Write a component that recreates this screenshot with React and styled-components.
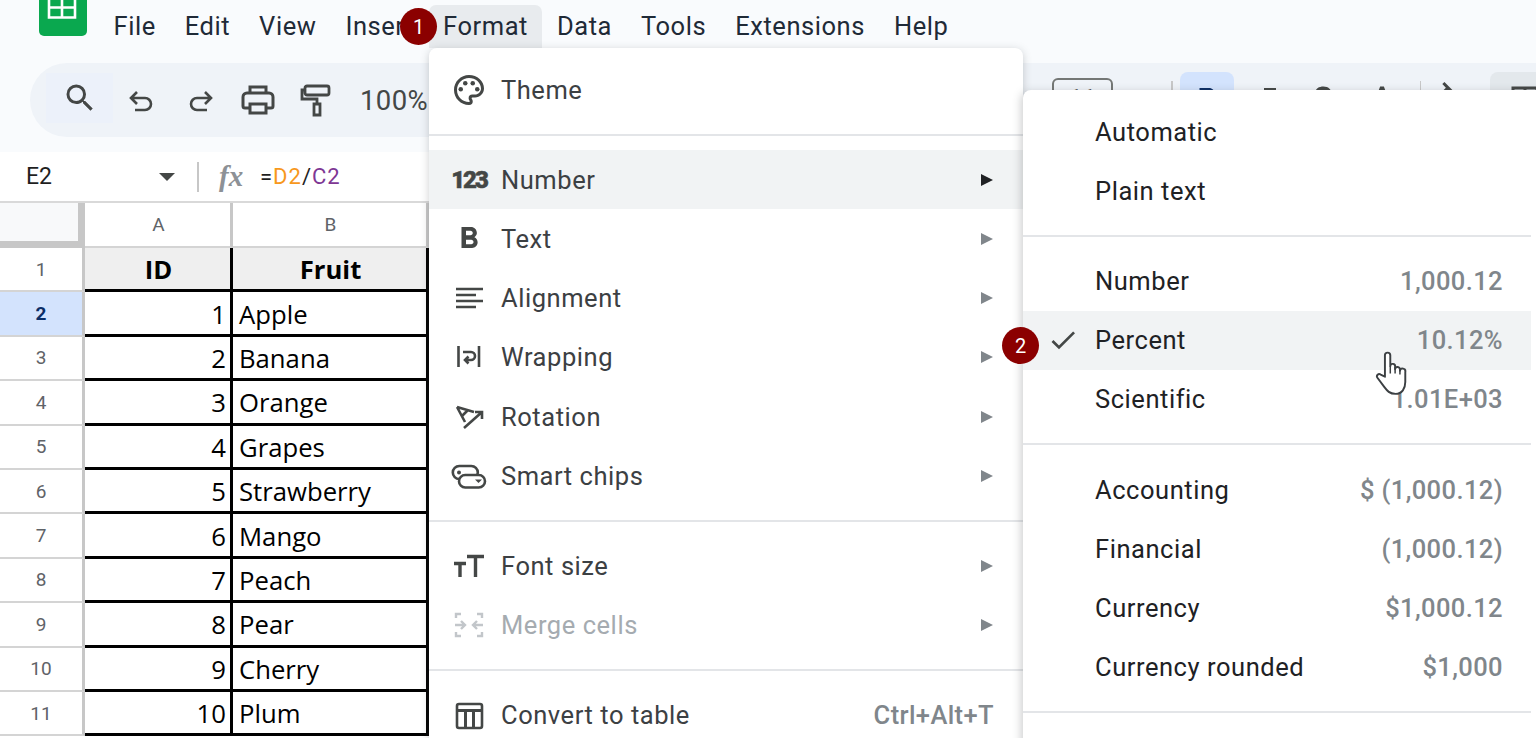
import React from "react";
import styled, { createGlobalStyle } from "styled-components";
import {
  MdOutlinePalette,
  MdFormatBold,
  MdSearch,
  MdCheck,
  MdFormatItalic,
  MdStrikethroughS,
  MdFormatColorText,
  MdFormatColorFill,
  MdBorderAll,
} from "react-icons/md";

const GlobalStyle = createGlobalStyle`
  html, body {
    margin: 0;
    padding: 0;
    background: #fff;
    overflow: hidden;
  }
  * { box-sizing: border-box; }
`;

const Stroke = styled.svg`
  display: block;
  fill: none;
  stroke: ${(p) => p.$color || "#444746"};
  stroke-width: ${(p) => p.$weight || 2.6};
`;

const Icon = ({ children, color, weight }) => (
  <Stroke width="36" height="36" viewBox="0 0 36 36" $color={color} $weight={weight}>
    {children}
  </Stroke>
);

const UndoIcon = () => (
  <Icon>
    <path d="M13 10l-6 6 6 6M7 16h14a6 6 0 0 1 0 12H11" />
  </Icon>
);
const RedoIcon = () => (
  <Icon>
    <path d="M23 10l6 6-6 6M29 16H15a6 6 0 0 0 0 12h10" />
  </Icon>
);
const PrintIcon = () => (
  <Icon weight={3}>
    <path d="M10 11V5h16v6M10 26H5a2 2 0 0 1-2-2v-9a4 4 0 0 1 4-4h22a4 4 0 0 1 4 4v9a2 2 0 0 1-2 2h-5M10 22h16v9H10z" />
  </Icon>
);
const RollerIcon = () => (
  <Icon weight={2.8}>
    <path d="M9 4h20a2 2 0 0 1 2 2v5a2 2 0 0 1-2 2H9a2 2 0 0 1-2-2V6a2 2 0 0 1 2-2zM7 8H4v9h15v5M16 22h6v11h-6z" />
  </Icon>
);
const AlignIcon = () => (
  <Icon>
    <path d="M5 9h27M5 15h20M5 21h27M5 27h20" />
  </Icon>
);
const WrapIcon = () => (
  <Icon>
    <path d="M7.5 7v21M28 7v21M12 13h8a4 4 0 0 1 0 8h-6M17.5 17.5L14 21l3.5 3.5" />
  </Icon>
);
const RotateIcon = () => (
  <Icon>
    <path d="M13 29L31 13M24 13h7v7M6 8l17 5M6 8l8 15M11 17l6-6" />
  </Icon>
);
const ChipsIcon = () => (
  <Icon>
    <rect x="1.8" y="8" width="25" height="13" rx="6.5" />
    <circle cx="8" cy="14.5" r="2" fill="#444746" stroke="none" />
    <rect x="8" y="17" width="26" height="12.5" rx="6.2" fill="#fff" />
    <path d="M24 21.5h7l-3.5 3.5z" fill="#444746" stroke="none" />
  </Icon>
);
const FontSizeIcon = () => (
  <Icon weight={3.4}>
    <path d="M3 15.5h12M9 15.5V29M16 8.5h17M24.5 8.5V29" />
  </Icon>
);
const MergeIcon = () => (
  <Icon color="#c2c6ca" weight={2.4}>
    <path d="M5 11V7h5M26 7h5v4M5 25v4h5M26 29h5v-4M4 18h10M10 14l4 4-4 4M32 18H22M26 14l-4 4 4 4" />
  </Icon>
);
const TableIcon = () => (
  <Icon>
    <rect x="6" y="7" width="25" height="24" rx="2" />
    <path d="M6 13.5h25M14.5 13.5V31M22.5 13.5V31" strokeWidth="3" />
  </Icon>
);

const Page = styled.div`
  position: relative;
  width: 1536px;
  height: 738px;
  overflow: hidden;
  background: #fff;
  font-family: Roboto, "Liberation Sans", sans-serif;
`;

const Header = styled.header`
  height: 152px;
  background: #f9fbfd;
`;

const TopBar = styled.div`
  display: flex;
  align-items: flex-start;
  height: 48px;
  padding: 5px 0 0 39px;
`;

const LogoMark = styled.svg`
  display: block;
  margin: -5px 12px 0 0;
`;

const TabList = styled.nav`
  display: flex;
`;

const Tab = styled.div`
  height: 43px;
  padding: 0 14.5px;
  line-height: 43px;
  font-size: 25.5px;
  letter-spacing: 0.55px;
  color: #1f2a37;
  border-radius: 7px 7px 0 0;
  background: ${(p) => (p.$open ? "#e8ebee" : "transparent")};
`;

const Toolbar = styled.div`
  display: flex;
  align-items: center;
  height: 74px;
  margin: 15px 0 0 30px;
  padding-left: 16px;
  border-radius: 37px 0 0 37px;
  background: #eff3f8;
  color: #444746;
  overflow: hidden;
`;

const SearchButton = styled.div`
  flex: none;
  display: flex;
  align-items: center;
  justify-content: center;
  width: 67px;
  height: 50px;
  margin-top: -4px;
  background: #ecf1fa;
  color: #444746;
`;

const ToolSlot = styled.div`
  flex: none;
  display: flex;
  align-items: center;
  justify-content: center;
  width: ${(p) => p.$w || 58}px;
  height: 56px;
  margin-left: ${(p) => p.$gap || 0}px;
  border-radius: 8px;
  font-size: ${(p) => p.$size || 24}px;
  background: ${(p) => p.$bg || "transparent"};
  color: ${(p) => p.$color || "#444746"};
`;

const ZoomLabel = styled.div`
  flex: none;
  width: 692px;
  margin-left: 15px;
  font-size: 27.5px;
  letter-spacing: 0.4px;
`;

const FontBox = styled.div`
  flex: none;
  width: 61px;
  height: 44px;
  padding-bottom: 6px;
  border: 2px solid #747775;
  border-radius: 6px;
  font-size: 24px;
  line-height: 36px;
  text-align: center;
`;

const ToolDivider = styled.div`
  flex: none;
  width: 1.5px;
  height: 38px;
  margin: 0 ${(p) => p.$right || 7}px 0 ${(p) => p.$left || 4}px;
  background: #c7c7c7;
`;

const FormulaBar = styled.div`
  display: flex;
  align-items: center;
  height: 51px;
  padding-left: 26px;
  background: #fff;
  border-bottom: 2px solid #d9d9d9;
`;

const CellName = styled.div`
  width: 133px;
  font-size: 23px;
  color: #1f1f1f;
`;

const Caret = styled.span`
  width: 0;
  height: 0;
  border-left: 8px solid transparent;
  border-right: 8px solid transparent;
  border-top: 8px solid #444746;
`;

const BarDivider = styled.span`
  width: 2px;
  height: 30px;
  margin-left: 22px;
  background: #c7c7c7;
`;

const FxMark = styled.span`
  margin-left: 20px;
  width: 41px;
  font-family: "Liberation Serif", serif;
  font-style: italic;
  font-weight: 700;
  font-size: 29px;
  color: #8d9196;
`;

const Formula = styled.div`
  font-size: 22px;
  letter-spacing: 1px;
  color: #1f1f1f;
`;

const RefPart = styled.span`
  color: ${(p) => p.$color};
`;

const Sheet = styled.div`
  display: grid;
  grid-template-columns: 85px 148px 196px;
  grid-template-rows: 45px repeat(11, 44.4px);
  width: 429px;
`;

const Corner = styled.div`
  border-right: 7px solid #c7c7c7;
  border-bottom: 7px solid #c7c7c7;
  background: #f8f9fa;
`;

const ColHead = styled.div`
  display: flex;
  align-items: center;
  justify-content: center;
  padding-left: 2px;
  border-right: 3px solid #c7c7c7;
  border-bottom: 2px solid #d4d4d4;
  font-size: 19px;
  color: #5f6368;
`;

const RowHead = styled.div`
  display: flex;
  align-items: center;
  justify-content: center;
  border-right: 3px solid #c7c7c7;
  border-bottom: 2px solid #d4d4d4;
  font-size: 19px;
  font-weight: ${(p) => (p.$active ? 700 : 400)};
  color: ${(p) => (p.$active ? "#0b2e66" : "#5f6368")};
  background: ${(p) => (p.$active ? "#d3e3fd" : "#fff")};
`;

const Cell = styled.div`
  display: flex;
  align-items: center;
  justify-content: ${(p) => p.$align || "flex-start"};
  padding: 2px 4px 0 6px;
  border-right: 3px solid #000;
  border-bottom: 3px solid #000;
  font-family: "Open Sans", "Noto Sans", sans-serif;
  font-size: 25.7px;
  font-weight: ${(p) => (p.$head ? 700 : 400)};
  color: #000;
  background: ${(p) => (p.$head ? "#efefef" : "#fff")};
`;

const Menu = styled.div`
  position: absolute;
  left: 429px;
  top: 48px;
  width: 594px;
  height: 720px;
  padding-top: 12px;
  border-radius: 8px;
  background: #fff;
  box-shadow: 0 2px 8px rgba(60, 64, 67, 0.25);
`;

const SubMenu = styled(Menu)`
  left: 1023px;
  top: 90px;
  width: 530px;
  padding-right: 22px;
  box-shadow: -2px 2px 8px rgba(60, 64, 67, 0.25);
`;

const Row = styled.div`
  display: flex;
  align-items: center;
  height: 59.2px;
  padding-right: ${(p) => p.$pad || 30}px;
  font-size: 25.5px;
  letter-spacing: 0.55px;
  color: ${(p) => (p.$off ? "#a5abb0" : p.$dark ? "#202124" : "#3c4043")};
  background: ${(p) => (p.$on ? "#f1f3f4" : "transparent")};
`;

const IconSlot = styled.span`
  display: flex;
  align-items: center;
  justify-content: center;
  flex: none;
  width: 36px;
  margin: 0 14px 0 22px;
  color: #444746;
`;

const NumberGlyph = styled.span`
  font-family: "Roboto", sans-serif;
  font-weight: 900;
  font-size: 24px;
  letter-spacing: -2px;
  -webkit-text-stroke: 0.5px #444746;
`;

const CheckSlot = styled.span`
  display: flex;
  align-items: center;
  justify-content: center;
  flex: none;
  width: 72px;
  padding-left: 8px;
  color: #444746;
`;

const RowLabel = styled.span`
  flex: 1;
`;

const Hint = styled.span`
  font-weight: 500;
  letter-spacing: 0.4px;
  color: #80868b;
`;

const Arrow = styled.span`
  width: 0;
  height: 0;
  border-left: 12px solid ${(p) => (p.$dark ? "#202124" : "#80868b")};
  border-top: 6.5px solid transparent;
  border-bottom: 6.5px solid transparent;
`;

const MenuRule = styled.div`
  height: 2px;
  margin: 14.5px 0;
  background: #e3e5e8;
`;

const Badge = styled.span`
  position: absolute;
  left: ${(p) => p.$x}px;
  top: ${(p) => p.$y}px;
  display: flex;
  align-items: center;
  justify-content: center;
  width: 37px;
  height: 37px;
  border-radius: 50%;
  background: #8b0000;
  color: #fff;
  font-size: 20px;
`;

const HandCursor = styled.svg`
  position: absolute;
  left: 1375px;
  top: 351px;
`;

const tabs = ["File", "Edit", "View", "Insert", "Format", "Data", "Tools", "Extensions", "Help"];

const fruits = ["Apple", "Banana", "Orange", "Grapes", "Strawberry", "Mango", "Peach", "Pear", "Cherry", "Plum"];

const formatRows = [
  { label: "Number", icon: <NumberGlyph>123</NumberGlyph>, on: true },
  { label: "Text", icon: <MdFormatBold size={40} /> },
  { label: "Alignment", icon: <AlignIcon /> },
  { label: "Wrapping", icon: <WrapIcon /> },
  { label: "Rotation", icon: <RotateIcon /> },
  { label: "Smart chips", icon: <ChipsIcon /> },
];

const numberGroups = [
  [
    { label: "Automatic" },
    { label: "Plain text" },
  ],
  [
    { label: "Number", hint: "1,000.12" },
    { label: "Percent", hint: "10.12%", on: true },
    { label: "Scientific", hint: "1.01E+03" },
  ],
  [
    { label: "Accounting", hint: "$ (1,000.12)" },
    { label: "Financial", hint: "(1,000.12)" },
    { label: "Currency", hint: "$1,000.12" },
    { label: "Currency rounded", hint: "$1,000" },
  ],
];

function App() {
  return (
    <Page>
      <GlobalStyle />
      <Header>
        <TopBar>
          <LogoMark width="48" height="36" viewBox="0 0 48 36">
            <path d="M0 0h48v31a5 5 0 0 1-5 5H5a5 5 0 0 1-5-5z" fill="#0aa84f" />
            <path d="M10 0v17.500h26V0M10 7.500h26M23 0v17.500" fill="none" stroke="#fff" strokeWidth="2.6" />
          </LogoMark>
          <TabList>
            {tabs.map((t) => (
              <Tab key={t} $open={t === "Format"}>{t}</Tab>
            ))}
          </TabList>
        </TopBar>
        <Toolbar>
          <SearchButton><MdSearch size={36} /></SearchButton>
          <ToolSlot><UndoIcon /></ToolSlot>
          <ToolSlot><RedoIcon /></ToolSlot>
          <ToolSlot><PrintIcon /></ToolSlot>
          <ToolSlot><RollerIcon /></ToolSlot>
          <ZoomLabel>100%</ZoomLabel>
          <FontBox>11</FontBox>
          <ToolSlot $w={54} $size={30}>+</ToolSlot>
          <ToolDivider />
          <ToolSlot $w={54} $bg="#d3e3fd" $color="#0b2e66"><MdFormatBold size={36} /></ToolSlot>
          <ToolSlot $w={66}><MdFormatItalic size={36} /></ToolSlot>
          <ToolSlot $w={46}><MdStrikethroughS size={36} /></ToolSlot>
          <ToolSlot $w={72}><MdFormatColorText size={36} /></ToolSlot>
          <ToolDivider $left={2} $right={6} />
          <ToolSlot $w={48}><MdFormatColorFill size={36} /></ToolSlot>
          <ToolSlot $w={70} $gap={15} $bg="#e3e8ec"><MdBorderAll size={36} /></ToolSlot>
        </Toolbar>
      </Header>

      <FormulaBar>
        <CellName>E2</CellName>
        <Caret />
        <BarDivider />
        <FxMark>fx</FxMark>
        <Formula>
          =<RefPart $color="#f7981d">D2</RefPart>/<RefPart $color="#7e3794">C2</RefPart>
        </Formula>
      </FormulaBar>

      <Sheet>
        <Corner />
        <ColHead>A</ColHead>
        <ColHead>B</ColHead>
        <RowHead>1</RowHead>
        <Cell $head $align="center">ID</Cell>
        <Cell $head $align="center">Fruit</Cell>
        {fruits.map((f, i) => (
          <React.Fragment key={f}>
            <RowHead $active={i === 0}>{i + 2}</RowHead>
            <Cell $align="flex-end">{i + 1}</Cell>
            <Cell>{f}</Cell>
          </React.Fragment>
        ))}
      </Sheet>

      <Menu>
        <Row>
          <IconSlot><MdOutlinePalette size={36} /></IconSlot>
          <RowLabel>Theme</RowLabel>
        </Row>
        <MenuRule />
        {formatRows.map((r) => (
          <Row key={r.label} $on={r.on}>
            <IconSlot>{r.icon}</IconSlot>
            <RowLabel>{r.label}</RowLabel>
            <Arrow $dark={r.on} />
          </Row>
        ))}
        <MenuRule />
        <Row>
          <IconSlot><FontSizeIcon /></IconSlot>
          <RowLabel>Font size</RowLabel>
          <Arrow />
        </Row>
        <Row $off>
          <IconSlot><MergeIcon /></IconSlot>
          <RowLabel>Merge cells</RowLabel>
          <Arrow />
        </Row>
        <MenuRule />
        <Row $pad={29}>
          <IconSlot><TableIcon /></IconSlot>
          <RowLabel>Convert to table</RowLabel>
          <Hint>Ctrl+Alt+T</Hint>
        </Row>
      </Menu>

      <SubMenu>
        {numberGroups.map((group) => (
          <React.Fragment key={group[0].label}>
            {group.map((r) => (
              <Row key={r.label} $on={r.on} $dark $pad={28}>
                <CheckSlot>{r.on && <MdCheck size={32} />}</CheckSlot>
                <RowLabel>{r.label}</RowLabel>
                {r.hint && <Hint>{r.hint}</Hint>}
              </Row>
            ))}
            <MenuRule />
          </React.Fragment>
        ))}
      </SubMenu>

      <Badge $x={400} $y={8}>1</Badge>
      <Badge $x={1002} $y={327}>2</Badge>
      <HandCursor width="37" height="45" viewBox="0 0 34 42">
        <path
          d="M9 24V4a2.5 2.5 0 0 1 5 0v10a2.2 2.2 0 0 1 4.5.6V17a2.2 2.2 0 0 1 4.5.5v1a2.2 2.2 0 0 1 5 1V29c0 6-3 11-9 11-6 0-8-3-11-7l-6-8c-1.500-2 1-4.500 3-3z"
          fill="#fff"
          stroke="#3c4043"
          strokeWidth="1.8"
          strokeLinejoin="round"
        />
        <path d="M14 14v7M18.500 15v6M23 18v4" fill="none" stroke="#3c4043" strokeWidth="1.4" />
      </HandCursor>
    </Page>
  );
}

export default App;
